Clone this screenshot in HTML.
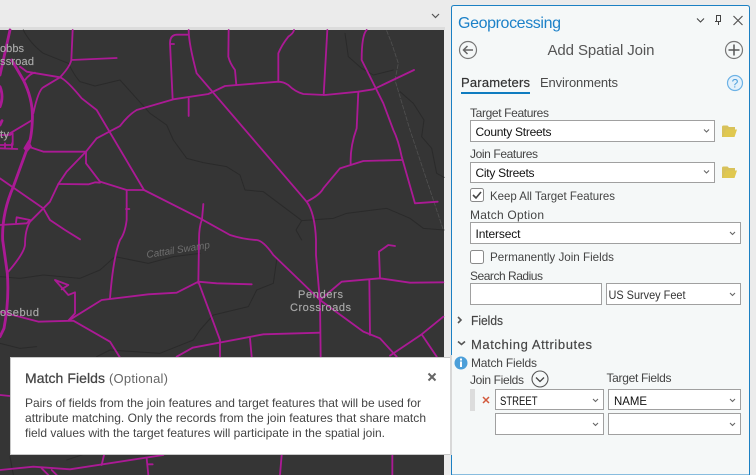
<!DOCTYPE html>
<html><head><meta charset="utf-8"><style>
html,body{margin:0;padding:0;width:756px;height:475px;overflow:hidden;background:#ebebeb}
svg{display:block}
text{font-family:"Liberation Sans",sans-serif;font-size:12px;fill:#444}
.v{fill:#111}
.m{fill:#a9a9a9;font-size:11px;stroke:#a9a9a9;stroke-width:.15}
.b{fill:#fff;stroke:#a0a0a0;stroke-width:1}
.c{fill:none;stroke:#666;stroke-width:1.1}
</style></head><body>
<svg width="756" height="475" viewBox="0 0 756 475" xmlns="http://www.w3.org/2000/svg">
<rect width="756" height="475" fill="#ebebeb"/>
<rect x="0" y="27" width="445" height="3" fill="#dcdcdc"/>
<rect x="0" y="30" width="444" height="445" fill="#353535"/>
<path d="M432 11l3.500 3.500 3.500-3.500" fill="none" stroke="#555" stroke-width="1.200" transform="translate(0 3)"/>

<g transform="scale(.33333)" fill="none" stroke-linejoin="round" stroke-linecap="round">
<g stroke="#2a2a2a" stroke-width="3">
<path d="M70 90Q90 130 130 160L205 190Q225 230 240 245L285 258L360 240L405 290L450 340L500 375L520 420L560 475L610 488L680 500L720 525L735 570L790 575L890 650L905 662L1000 655L1040 640L1160 625L1230 655L1270 685L1332 690"/>
<path d="M1035 100L1045 170L1085 205L1120 225L1180 210M1200 275L1240 310L1272 360L1265 410L1295 445L1310 520L1332 532"/>
<path d="M905 662L888 690L905 720M0 830L60 835L130 825L240 835L300 810L345 770L445 790L520 770L600 760M830 780L820 850L770 870L745 920L640 945L600 990L580 1020L480 1060L330 1050L290 1070M0 1030L60 1045L110 1040M30 1370L40 1425M200 1380L260 1360"/>
</g>
<path stroke="#505050" stroke-width="2.500" stroke-dasharray="12 6" d="M1160 92L1175 130L1195 190L1185 240L1230 390L1290 570L1330 690"/>
<g stroke="#ab1a95" stroke-width="5.500">
<path d="M218 90L214 180L350 174M214 180Q210 200 180 232L130 262Q115 270 100 340"/>
<path d="M60 200L80 215L180 232Q200 240 245 295L290 330L432 570M75 240Q90 220 105 218"/>
<path d="M566 90Q566 130 590 220L920 605Q945 640 948 720L948 765L960 905L962 1070"/>
<path d="M518 298L510 130Q510 105 530 104L566 104M510 132L522 132M566 295L566 348"/>
<path d="M686 90L685 170Q690 190 705 210L709 255M882 90Q880 100 865 110Q845 135 835 160L835 245M982 90L971 285"/>
<path d="M1100 90Q1085 105 1085 180L1150 310L1180 390Q1195 420 1205 470L1245 610L1313 605"/>
<path d="M258 455L290 415L360 378Q385 345 410 330L520 298L625 282L675 258L835 245Q850 245 865 255Q885 275 910 282L975 285L1075 275L1120 268L1242 210"/>
<path d="M1075 275L1070 385Q1050 440 1052 492M920 605Q960 585 970 565L1020 505L1090 483L1205 480"/>
<path d="M30 400L97 360M85 440L130 455L258 455L258 490L300 545L380 570L432 570L600 655L690 705Q730 718 770 720Q790 722 820 765L960 900L1090 995L1140 1015L1190 1070"/>
<path d="M258 455L200 515L175 552L150 605L90 665Q75 690 75 735Q72 760 25 815"/>
<path d="M175 552L265 553L285 547L300 548M380 570L380 660Q375 700 360 720Q340 770 330 895M378 627L388 627"/>
<path d="M610 612L606 658Q597 680 597 720L595 850M0 535L130 625L150 660L195 690L240 718M0 675L80 670L90 660L50 652L48 668"/>
<path d="M205 962L305 900L445 883L530 878L595 845L650 850L755 853M595 845L660 1020L660 1070"/>
<path d="M0 935L115 965L220 962L330 1025L360 1073M205 962L225 940L225 877L205 885L165 840L205 855L185 868"/>
<path d="M530 1070L578 1043L790 1003L960 998M750 1015L755 1070"/>
<path d="M960 900L1025 845L1140 835L1230 848L1330 847M1108 840L1110 1005M1140 835L1137 755L1165 735L1185 738M1170 1067L1265 1003L1330 950M1265 1003L1310 1070"/>
<path d="M0 1410L100 1400L210 1408L490 1365M305 1395L312 1365M440 1375L445 1425M445 1393L458 1393M845 1365L840 1425M1177 1365L1177 1425M125 1405L145 1425M155 1410L170 1425M0 1185L30 1188"/>
<path d="M0 405L30 405L38 400L38 435L0 435M0 445L52 447M15 430L15 445M36 430L36 445"/>
</g>
<g stroke="#ab1a95" stroke-width="8.500">
<path d="M0 225L30 90M35 180L70 240Q100 300 97 360Q95 420 80 450L40 560Q5 640 8 720Q12 750 22 820Q28 900 12 985L0 1010"/>
<path d="M0 260Q12 290 0 320M0 375L6 362"/>
</g>
<path fill="#ab1a95" d="M70 445L85 420L96 440L80 458Z"/>
</g>

<text class="m" x="0" y="52" textLength="24" lengthAdjust="spacing">obbs</text>
<text class="m" x="0" y="65" textLength="34" lengthAdjust="spacing">ssroad</text>
<text class="m" x="0" y="138" textLength="9" lengthAdjust="spacing">ty</text>
<text class="m" x="0" y="316" textLength="39" lengthAdjust="spacing">osebud</text>
<text class="m" x="298" y="298" textLength="45" lengthAdjust="spacing">Penders</text>
<text class="m" x="290" y="311" textLength="61" lengthAdjust="spacing">Crossroads</text>
<text x="147" y="258" transform="rotate(-9 147 258)" textLength="64" lengthAdjust="spacing" style="fill:#6f6f6f;font-size:10px;font-style:italic">Cattail Swamp</text>

<!-- popup -->
<rect x="10.500" y="357.500" width="441" height="97" fill="#fff" stroke="#c8c8c8"/>
<text x="25" y="383" textLength="80" lengthAdjust="spacing" style="font-size:14px;fill:#444;stroke:#444;stroke-width:.25">Match Fields</text>
<text x="109" y="383" textLength="59" lengthAdjust="spacing" style="font-size:13px;fill:#666">(Optional)</text>
<path d="M428.500 373.500l7 7m0-7l-7 7" stroke="#666" stroke-width="2" fill="none"/>
<text x="25" y="407" textLength="396" lengthAdjust="spacing">Pairs of fields from the join features and target features that will be used for</text>
<text x="25" y="422" textLength="401" lengthAdjust="spacing">attribute matching. Only the records from the join features that share match</text>
<text x="25" y="437" textLength="360" lengthAdjust="spacing">field values with the target features will participate in the spatial join.</text>

<!-- panel -->
<path d="M451.500 475V8q0-2.500 2.500-2.500H747q2.500 0 2.500 2.500V475Z" fill="#f5f8f8" stroke="#1b80c3"/>
<rect x="450" y="355" width="2" height="100" fill="#d8d8d8"/>
<text x="458" y="28" textLength="103" lengthAdjust="spacing" style="font-size:16px;fill:#1c81c8">Geoprocessing</text>
<path d="M697 18.500l3.500 3.500 3.500-3.500" class="c" style="stroke:#444"/>
<path d="M716 15.500h5M716.500 15.500v6h4v-6M715 21.500h6M718.500 21.500v3.500" fill="none" stroke="#444" stroke-width="1"/>
<path d="M733.500 16l9 9m0-9l-9 9" fill="none" stroke="#555" stroke-width="1.200"/>
<circle cx="468" cy="50" r="8.500" fill="none" stroke="#777" stroke-width="1.200"/>
<path d="M473 50h-9.500M467.500 46l-4 4 4 4" fill="none" stroke="#666" stroke-width="1.500"/>
<circle cx="734" cy="50" r="8.500" fill="none" stroke="#777" stroke-width="1.200"/>
<path d="M734 44.500v11M728.500 50h11" fill="none" stroke="#555" stroke-width="1.500"/>
<text x="547.500" y="55" textLength="107" lengthAdjust="spacing" style="font-size:15px;fill:#555">Add Spatial Join</text>
<text x="461" y="87" textLength="69" lengthAdjust="spacing" style="font-size:13px;fill:#333;stroke:#333;stroke-width:.2">Parameters</text>
<text x="540" y="87" textLength="78" lengthAdjust="spacing" style="font-size:13px;fill:#4a4a4a">Environments</text>
<rect x="461" y="92" width="69" height="2" fill="#0f7cc0"/>
<circle cx="735" cy="83" r="7.500" fill="#e4f1fb" stroke="#6cb2e6" stroke-width="1.200"/>
<text x="735" y="87.500" text-anchor="middle" style="font-size:12px;fill:#4a9ddb">?</text>

<text x="470" y="117" textLength="79" lengthAdjust="spacing">Target Features</text>
<rect class="b" x="470.500" y="120.500" width="244" height="21"/>
<text class="v" x="475.500" y="136" textLength="76" lengthAdjust="spacing">County Streets</text>
<path class="c" d="M704 129.500l2.500 2.500 2.500-2.500"/>
<path d="M722 137v-10q0-1.500 1.500-1.500h4l1.500 1.500h6v2.500h-8.500l-3 7.500z" fill="#d8c25b"/><path d="M723 137l3-7.500h11l-2.500 7.500z" fill="#e0c850"/>

<text x="470" y="158" textLength="68" lengthAdjust="spacing">Join Features</text>
<rect class="b" x="470.500" y="162.500" width="244" height="20"/>
<text class="v" x="475.500" y="177" textLength="59" lengthAdjust="spacing">City Streets</text>
<path class="c" d="M704 170.500l2.500 2.500 2.500-2.500"/>
<path d="M722 178v-10q0-1.500 1.500-1.500h4l1.500 1.500h6v2.500h-8.500l-3 7.500z" fill="#d8c25b"/><path d="M723 178l3-7.500h11l-2.500 7.500z" fill="#e0c850"/>

<rect x="470.500" y="188.500" width="13" height="13" rx="2" fill="#fff" stroke="#8a8a8a"/>
<path d="M473 195l3 3 5-6" fill="none" stroke="#444" stroke-width="1.600"/>
<text x="490" y="200" textLength="125" lengthAdjust="spacingAndGlyphs">Keep All Target Features</text>

<text x="470" y="219" textLength="74" lengthAdjust="spacing">Match Option</text>
<rect class="b" x="470.500" y="222.500" width="270" height="21"/>
<text class="v" x="475.500" y="238" textLength="45" lengthAdjust="spacing">Intersect</text>
<path class="c" d="M730 232l2.500 2.500 2.500-2.500"/>

<rect x="470.500" y="250.500" width="13" height="13" rx="2" fill="#fff" stroke="#8a8a8a"/>
<text x="490" y="261" textLength="124" lengthAdjust="spacingAndGlyphs">Permanently Join Fields</text>

<text x="470" y="280" textLength="73" lengthAdjust="spacing">Search Radius</text>
<rect class="b" x="470.500" y="283.500" width="131" height="21"/>
<rect class="b" x="606.500" y="283.500" width="134" height="21"/>
<text x="608.500" y="299" textLength="77" lengthAdjust="spacingAndGlyphs" style="fill:#333">US Survey Feet</text>
<path class="c" d="M730 293l2.500 2.500 2.500-2.500"/>

<path d="M458 317l3 3-3 3" fill="none" stroke="#555" stroke-width="1.600"/>
<text x="471" y="325" textLength="32" lengthAdjust="spacingAndGlyphs" style="font-size:13px;stroke:#444;stroke-width:.15">Fields</text>
<path d="M458 341.500l3.500 3 3.500-3" fill="none" stroke="#555" stroke-width="1.600"/>
<text x="471" y="349" textLength="121" lengthAdjust="spacing" style="font-size:13px;stroke:#444;stroke-width:.15">Matching Attributes</text>

<circle cx="461" cy="363" r="6.500" fill="#4c9fd9"/>
<rect x="460" y="361.500" width="2" height="5.500" fill="#fff"/><rect x="460" y="358.500" width="2" height="2" fill="#fff"/>
<text x="471" y="367" textLength="66" lengthAdjust="spacing">Match Fields</text>
<text x="470" y="384" textLength="54" lengthAdjust="spacing">Join Fields</text>
<circle cx="540" cy="379" r="8" fill="none" stroke="#555" stroke-width="1.100"/>
<path d="M536 377.500l4 4 4-4" fill="none" stroke="#444" stroke-width="1.300"/>
<text x="606.500" y="382" textLength="65" lengthAdjust="spacing">Target Fields</text>

<rect x="470" y="389" width="5" height="22" fill="#dcdcdc"/>
<path d="M483 397l6 6m0-6l-6 6" fill="none" stroke="#d2593c" stroke-width="1.500"/>
<rect class="b" x="495.500" y="389.500" width="108" height="20"/>
<rect class="b" x="608.500" y="389.500" width="132" height="20"/>
<text class="v" x="500" y="405" textLength="37.500" lengthAdjust="spacingAndGlyphs">STREET</text>
<text class="v" x="614" y="405" textLength="33" lengthAdjust="spacingAndGlyphs">NAME</text>
<path class="c" d="M593 399l2.500 2.500 2.500-2.500M730 399l2.500 2.500 2.500-2.500"/>
<rect class="b" x="495.500" y="413.500" width="108" height="21"/>
<rect class="b" x="608.500" y="413.500" width="132" height="21"/>
<path class="c" d="M593 423l2.500 2.500 2.500-2.500M730 423l2.500 2.500 2.500-2.500"/>
</svg>
</body></html>
